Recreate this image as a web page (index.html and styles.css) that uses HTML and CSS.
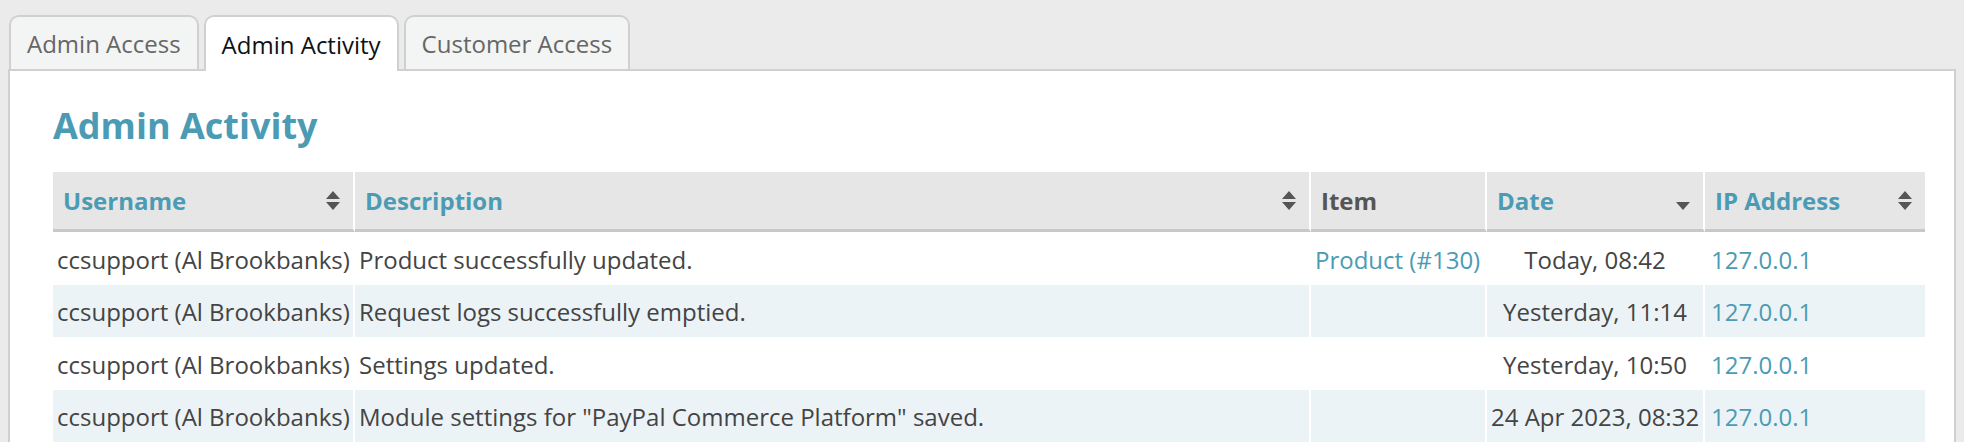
FILE: index.html
```html
<!DOCTYPE html>
<html lang="en">
<head>
<meta charset="utf-8">
<title>Admin Activity</title>
<link rel="stylesheet" href="styles.css">
</head>
<body>
<div class="tabs">
  <div class="tab">Admin Access</div>
  <div class="tab active">Admin Activity</div>
  <div class="tab">Customer Access</div>
</div>
<div class="panel">
  <h2 class="title">Admin Activity</h2>
  <table class="log">
    <colgroup>
      <col class="c-user">
      <col class="c-desc">
      <col class="c-item">
      <col class="c-date">
      <col class="c-ip">
    </colgroup>
    <thead>
      <tr>
        <th><div class="th-in"><a class="sortable">Username</a><span class="sort both"><i class="up"></i><i class="down"></i></span></div></th>
        <th><div class="th-in"><a class="sortable">Description</a><span class="sort both"><i class="up"></i><i class="down"></i></span></div></th>
        <th><div class="th-in"><span class="plain">Item</span></div></th>
        <th><div class="th-in"><a class="sortable">Date</a><span class="sort desc"><i class="down"></i></span></div></th>
        <th class="last"><div class="th-in"><a class="sortable">IP Address</a><span class="sort both"><i class="up"></i><i class="down"></i></span></div></th>
      </tr>
    </thead>
    <tbody>
      <tr>
        <td>ccsupport (Al Brookbanks)</td>
        <td>Product successfully updated.</td>
        <td><a class="link">Product (#130)</a></td>
        <td class="date">Today, 08:42</td>
        <td class="last"><a class="link">127.0.0.1</a></td>
      </tr>
      <tr class="alt">
        <td>ccsupport (Al Brookbanks)</td>
        <td>Request logs successfully emptied.</td>
        <td></td>
        <td class="date">Yesterday, 11:14</td>
        <td class="last"><a class="link">127.0.0.1</a></td>
      </tr>
      <tr>
        <td>ccsupport (Al Brookbanks)</td>
        <td>Settings updated.</td>
        <td></td>
        <td class="date">Yesterday, 10:50</td>
        <td class="last"><a class="link">127.0.0.1</a></td>
      </tr>
      <tr class="alt">
        <td>ccsupport (Al Brookbanks)</td>
        <td>Module settings for "PayPal Commerce Platform" saved.</td>
        <td></td>
        <td class="date">24 Apr 2023, 08:32</td>
        <td class="last"><a class="link">127.0.0.1</a></td>
      </tr>
    </tbody>
  </table>
</div>
</body>
</html>
```
FILE: styles.css
```css
html, body {
  margin: 0;
  padding: 0;
}
body {
  background: #ebebeb;
  font-family: "Open Sans", "Liberation Sans", sans-serif;
  font-size: 24px;
  color: #444;
  overflow: hidden;
  height: 442px;
}
.tabs {
  display: flex;
  gap: 5px;
  padding: 15px 0 0 9px;
  position: relative;
  z-index: 1;
}
.tab {
  height: 54px;
  box-sizing: border-box;
  padding: 0 16px;
  display: flex;
  align-items: center;
  background: #f3f4f4;
  color: #666;
  border: 2px solid #d0d0d0;
  border-bottom: none;
  border-radius: 10px 10px 0 0;
  font-size: 24px;
}
.tab.active {
  background: #fff;
  color: #111;
  height: 56px;
  margin-bottom: -2px;
}
.panel {
  margin: 0 8px;
  background: #fff;
  border: 2px solid #d0d0d0;
  border-bottom: none;
  padding: 34px 29px 0 43px;
}
.title {
  margin: 0 0 25px;
  font-size: 36px;
  line-height: 42px;
  font-weight: 700;
  color: #4b9bb4;
}
.log {
  width: 100%;
  border-collapse: separate;
  border-spacing: 0;
  table-layout: fixed;
}
.c-user { width: 302px; }
.c-desc { width: 956px; }
.c-item { width: 176px; }
.c-date { width: 218px; }
.c-ip { width: 220px; }
.log th {
  background: #e6e6e6;
  padding: 0 13px 0 10px;
  border-right: 2px solid #fff;
  border-bottom: 3px solid #c8c8c8;
  text-align: left;
  font-weight: 700;
  color: #555;
  box-sizing: border-box;
  height: 60px;
}
.log th.last, .log td.last { border-right: none; }
.th-in {
  display: flex;
  align-items: center;
  justify-content: space-between;
}
.sortable { color: #4b9bb4; }
.plain { color: #555; }
.sort {
  display: flex;
  flex-direction: column;
  gap: 3px;
  width: 14px;
}
.sort i {
  display: block;
  width: 0;
  height: 0;
  border-left: 7px solid transparent;
  border-right: 7px solid transparent;
}
.sort i.up { border-bottom: 8px solid #555; }
.sort i.down { border-top: 8px solid #555; }
.sort.desc { padding-top: 11px; }
.log td {
  padding: 3px 4px 0;
  height: 52.5px;
  line-height: 32px;
  border-right: 2px solid #fff;
  white-space: nowrap;
  color: #444;
  box-sizing: border-box;
}
.log tr.alt td { background: #ecf3f6; }
.log td.date { text-align: center; }
.log td.last { padding-left: 6px; }
.link { color: #4b9bb4; }
```
